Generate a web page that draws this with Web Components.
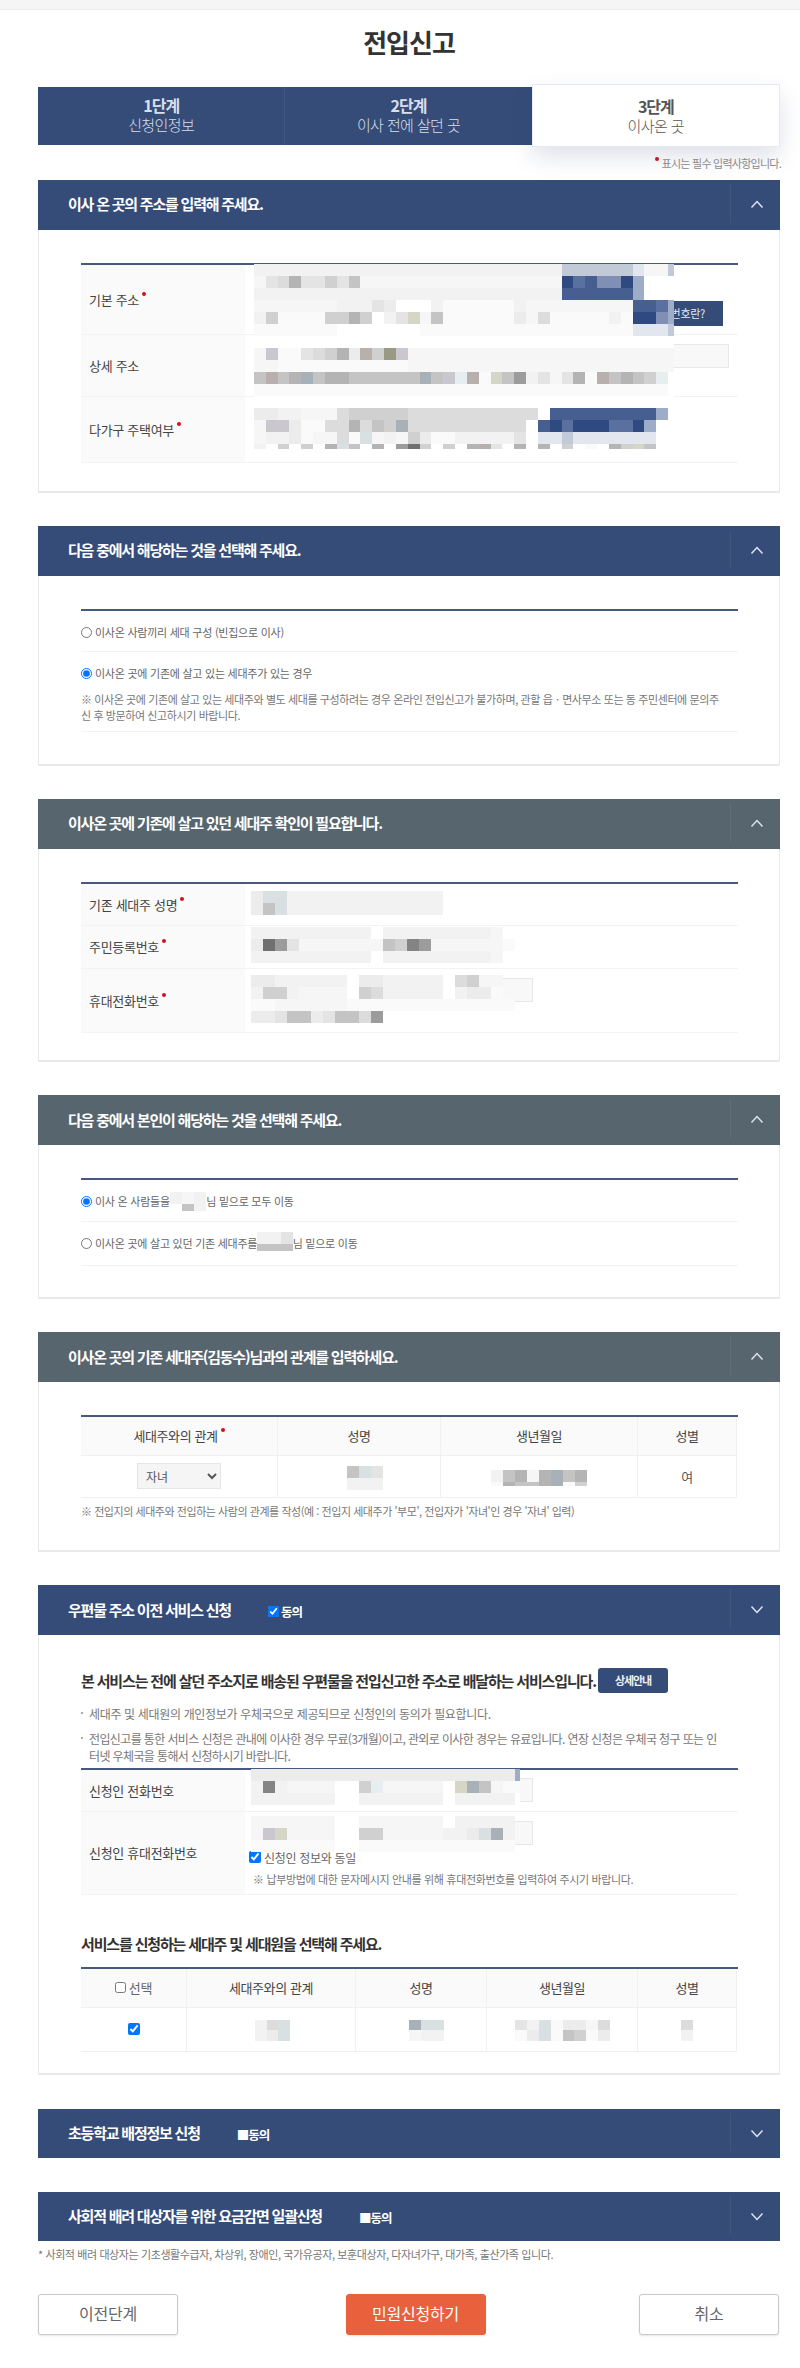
<!DOCTYPE html>
<html lang="ko">
<head>
<meta charset="utf-8">
<title>전입신고</title>
<style>
  html, body { margin: 0; background: #fff; }
  body { font-family: "Noto Sans CJK KR", "Noto Sans", sans-serif; color: #444; }
</style>
</head>
<body>
<move-in-page>
  <page-title>전입신고</page-title>
  <step-tabs>
    <step-tab step="1단계" name="신청인정보"></step-tab>
    <step-tab step="2단계" name="이사 전에 살던 곳"></step-tab>
    <step-tab step="3단계" name="이사온 곳" active></step-tab>
  </step-tabs>
  <req-note>표시는 필수 입력사항입니다.</req-note>

  <section-stack>
    <form-section heading="이사 온 곳의 주소를 입력해 주세요." body-height="263" open>
      <form-table>
        <form-row label="기본 주소" required h="69" justify="end">
          <small-button style="margin:36px 15px 0 0">우편번호란?</small-button>
        </form-row>
        <form-row label="상세 주소" h="61">
          <text-box style="width:474px;margin:9px 0 0 10px"></text-box>
        </form-row>
        <form-row label="다가구 주택여부" required h="65"></form-row>
        <pixel-block at="173,-1" cell="11.83,12" clip="420,185" rows="77777777777777777777777777kkkkkkj88k|85415535288888888888888888nmoiinlwww|77777777777777777777777777oooooolwww|888888877756www79999997888888888ooml|7399993313w75q8299999968499999 79nnil|9999999wwwwwww999999999999999999jjjk|wwwwwwwwwwwwwwwwwwwwwwwwwwwwwwwwwwww|8p9954316s3tp88888888888888888888888|889999999999988888888888888888888888|2s21r211222222r2pvs9q20758519s2123vw|99999999999999999999999999999999999w|wwwwwwwwwwwwwwwwwwwwwwwwwwwwwwwwwwww|667788843333344444444444wooooooooolww|8pp6994414 23r4444444444wonmnnnmmnlww|87769884 9u87836997777 75wjjkjjjjjjjww|7w3w3w1u2w1w0z3w3w1s5w1w1w3w9w13q2ww"></pixel-block>
      </form-table>
    </form-section>

    <form-section heading="다음 중에서 해당하는 것을 선택해 주세요." body-height="190" open>
      <form-table>
        <option-row h="41" text="이사온 사람끼리 세대 구성 (빈집으로 이사)"></option-row>
        <option-row h="80" text="이사온 곳에 기존에 살고 있는 세대주가 있는 경우" checked>
          ※ 이사온 곳에 기존에 살고 있는 세대주와 별도 세대를 구성하려는 경우 온라인 전입신고가 불가하며, 관할 읍ㆍ면사무소 또는 동 주민센터에 문의주<br>신 후 방문하여 신고하시기 바랍니다.
        </option-row>
      </form-table>
    </form-section>

    <form-section heading="이사온 곳에 기존에 살고 있던 세대주 확인이 필요합니다." tone="grey" body-height="213" open>
      <form-table>
        <form-row label="기존 세대주 성명" required h="41"></form-row>
        <form-row label="주민등록번호" required h="42"></form-row>
        <form-row label="휴대전화번호" required h="63">
          <text-box style="width:80px;margin:9px 0 0 208px"></text-box>
        </form-row>
        <pixel-block at="170,7" rows="6uu7777777777777|62u7777777777777"></pixel-block>
        <pixel-block at="170,43" rows="7777777777w7777777778|6z05888888823x0888888 9|7777777777w7777777778"></pixel-block>
        <pixel-block at="170,91" rows="66777777w6677777w4388|73378888w3477777w7669|9988888899999999999999|66522652240"></pixel-block>
      </form-table>
    </form-section>

    <form-section heading="다음 중에서 본인이 해당하는 것을 선택해 주세요." tone="grey" body-height="154" open>
      <form-table>
        <option-row h="42" checked text="이사 온 사람들을<gap-33>)님 밑으로 모두 이동"></option-row>
        <option-row h="44" text="이사온 곳에 살고 있던 기존 세대주를<gap-32>)님 밑으로 이동"></option-row>
        <pixel-block at="89,12" clip="36,19" rows="787|w27"></pixel-block>
        <pixel-block at="176,52" clip="36,19" rows="775|222"></pixel-block>
      </form-table>
    </form-section>

    <form-section heading="이사온 곳의 기존 세대주(김동수)님과의 관계를 입력하세요." tone="grey" body-height="170" open>
      <form-table>
        <grid-table columns="197px 163px 197px 99px" rows="39px 42px">
          <grid-cell head><span>세대주와의 관계<req-dot></req-dot></span></grid-cell>
          <grid-cell head>성명</grid-cell>
          <grid-cell head>생년월일</grid-cell>
          <grid-cell head>성별</grid-cell>
          <grid-cell><relation-select></relation-select></grid-cell>
          <grid-cell></grid-cell>
          <grid-cell></grid-cell>
          <grid-cell>여</grid-cell>
          <pixel-block at="266,49" rows="2u5|777"></pixel-block>
          <pixel-block at="410,53" clip="96,16" rows="72181r21|91221r93"></pixel-block>
        </grid-table>
      </form-table>
      <fine-note style="margin-top:5px">※ 전입지의 세대주와 전입하는 사람의 관계를 작성(예 : 전입지 세대주가 '부모', 전입자가 '자녀'인 경우 '자녀' 입력)</fine-note>
    </form-section>

    <form-section heading="우편물 주소 이전 서비스 신청" agree="check" agree-gap="37" body-height="440" open chevron="down">
      <lead-line style="margin-top:33px">본 서비스는 전에 살던 주소지로 배송된 우편물을 전입신고한 주소로 배달하는 서비스입니다.<info-button>상세안내</info-button></lead-line>
      <dot-item style="margin-top:12px;letter-spacing:-.34px">세대주 및 세대원의 개인정보가 우체국으로 제공되므로 신청인의 동의가 필요합니다.</dot-item>
      <dot-item style="margin-top:8px">전입신고를 통한 서비스 신청은 관내에 이사한 경우 무료(3개월)이고, 관외로 이사한 경우는 유료입니다. 연장 신청은 우체국 청구 또는 인<br>터넷 우체국을 통해서 신청하시기 바랍니다.</dot-item>
      <form-table style="margin-top:4px">
        <form-row label="신청인 전화번호" h="41">
          <text-box style="width:80px;margin:8px 0 0 208px"></text-box>
        </form-row>
        <form-row label="신청인 휴대전화번호" h="82">
          <div>
            <text-box style="width:80px;margin:9px 0 0 208px"></text-box>
            <same-check>신청인 정보와 동일</same-check>
            <fine-note style="margin:5px 0 0 8px;letter-spacing:-.34px">※ 납부방법에 대한 문자메시지 안내를 위해 휴대전화번호를 입력하여 주시기 바랍니다.</fine-note>
          </div>
        </form-row>
        <pixel-block at="170,-1" clip="269,36" rows="6666666666666666666666l|7x78888ww3v88888wqr28 99|7777777ww7777777w77777w"></pixel-block>
        <pixel-block at="170,46" rows="8888888ww8888888w77777|8pq8888ww3388888776ur7|9999999ww9999999999999"></pixel-block>
      </form-table>
      <lead-line style="margin-top:36px">서비스를 신청하는 세대주 및 세대원을 선택해 주세요.</lead-line>
      <form-table style="margin-top:11px">
        <grid-table columns="106px 169px 131px 151px 99px" rows="39px 44px">
          <grid-cell head><same-check mini>선택</same-check></grid-cell>
          <grid-cell head>세대주와의 관계</grid-cell>
          <grid-cell head>성명</grid-cell>
          <grid-cell head>생년월일</grid-cell>
          <grid-cell head>성별</grid-cell>
          <grid-cell><same-check checked-only></same-check></grid-cell>
          <grid-cell></grid-cell>
          <grid-cell></grid-cell>
          <grid-cell></grid-cell>
          <grid-cell></grid-cell>
          <pixel-block at="174,51" cell="11.5,10.5" rows="74u|76u"></pixel-block>
          <pixel-block at="328,51" cell="11.5,10.5" rows="ruu|877"></pixel-block>
          <pixel-block at="434,51" cell="11.9,10.5" rows="57u96684|96u92396"></pixel-block>
          <pixel-block at="600,51" cell="12,10.5" rows="4|7"></pixel-block>
        </grid-table>
      </form-table>
    </form-section>

    <form-section heading="초등학교 배정정보 신청" agree="box" agree-gap="37" chevron="down"></form-section>
    <form-section heading="사회적 배려 대상자를 위한 요금감면 일괄신청" agree="box" agree-gap="37" chevron="down"></form-section>
  </section-stack>

  <fine-note style="height:26px;display:flex;align-items:center;letter-spacing:-.4px">* 사회적 배려 대상자는 기초생활수급자, 차상위, 장애인, 국가유공자, 보훈대상자, 다자녀가구, 대가족, 출산가족 입니다.</fine-note>

  <action-bar>
    <action-button>이전단계</action-button>
    <action-button primary>민원신청하기</action-button>
    <action-button>취소</action-button>
  </action-bar>
</move-in-page>

<script>
const BLUE = '#354c78';
const GREY = '#57656e';
const KR = '"Noto Sans CJK KR", "Noto Sans", sans-serif';

// palette for the blurred (mosaic) personal data blocks
const SHADES = {
  w: '#ffffff', 9: '#fafafa', 8: '#f6f6f6', 7: '#f2f2f2', 6: '#ececec', 5: '#e4e4e4',
  4: '#dcdcdc', 3: '#d0d0d0', 2: '#c4c4c4', 1: '#b4b4b4', 0: '#9c9c9c', x: '#848484', z: '#707070',
  n: '#2f4a80', o: '#465f90', m: '#5a709f', i: '#8090b4', l: '#9dacc7', k: '#c2cad8', j: '#e2e7ef',
  p: '#cbc7cf', q: '#d6d6c6', r: '#a9b1b8', s: '#b8b0ac', t: '#9a9a84', u: '#d8e0e2', v: '#e6eeef'
};

class Base extends HTMLElement {
  constructor() {
    super();
    this.attachShadow({ mode: 'open' });
  }
  connectedCallback() {
    this.shadowRoot.innerHTML = this.markup();
  }
  markup() { return '<slot></slot>'; }
}

class MoveInPage extends Base {
  markup() {
    return `<style>
      :host { display: block; height: 2368px; overflow: hidden; box-sizing: border-box; font-family: ${KR}; }
      .top { height: 9px; background: #f5f5f5; border-bottom: 1px solid #eee; }
      .wrap { padding: 0 20px 0 38px; }
    </style>
    <div class="top"></div>
    <div class="wrap"><slot></slot></div>`;
  }
}

class PageTitle extends Base {
  markup() {
    return `<style>
      :host { display: flex; height: 77px; align-items: center; justify-content: center; padding-bottom: 14px; box-sizing: border-box;
        font-size: 26px; font-weight: 700; letter-spacing: -1px; color: #333; }
    </style><slot></slot>`;
  }
}

class StepTabs extends Base {
  markup() {
    return `<style>:host { display: flex; height: 58px; background: ${BLUE}; }</style><slot></slot>`;
  }
}

class StepTab extends Base {
  markup() {
    return `<style>
      :host { flex: 1; display: block; text-align: center; padding-top: 8px; box-sizing: border-box; color: #d9dfe9;
        border-left: 1px solid #3f5782; }
      :host(:first-child) { border-left: 0; }
      :host([active]) { background: #fff; color: #555; margin: -3px 0 -2px; padding-top: 11px; border: 1px solid #e6e9ef;
        box-shadow: 0 10px 22px rgba(53, 76, 120, .16); position: relative; }
      .s { font-size: 16px; font-weight: 700; line-height: 20px; letter-spacing: -1px; }
      .n { font-size: 15px; line-height: 20px; letter-spacing: -.6px; font-weight: 300; }
    </style>
    <div class="s">${this.getAttribute('step')}</div>
    <div class="n">${this.getAttribute('name')}</div>`;
  }
}

class ReqDot extends Base {
  markup() {
    return `<style>
      :host { display: inline-block; width: 4px; height: 4px; border-radius: 50%; background: #d2101c;
        vertical-align: 9px; margin-left: 3px; }
    </style>`;
  }
}

class ReqNote extends Base {
  markup() {
    return `<style>
      :host { display: flex; height: 35px; justify-content: flex-end; align-items: center; padding-right: 0; margin-right: -1px;
        font-size: 11px; letter-spacing: -.75px; color: #8a8a8a; position: relative; }
      i { width: 4px; height: 4px; border-radius: 50%; background: #d2101c; margin: -8px 3px 0 0; }
    </style><i></i><span><slot></slot></span>`;
  }
}

class SectionStack extends Base {
  markup() {
    return `<style>:host { display: flex; flex-direction: column; gap: 33.6px; }</style><slot></slot>`;
  }
}

class FormSection extends Base {
  markup() {
    const tone = this.getAttribute('tone') === 'grey' ? GREY : BLUE;
    const down = this.getAttribute('chevron') === 'down';
    const agree = this.getAttribute('agree');
    let agreeHtml = '';
    if (agree === 'check') agreeHtml = `<label class="agree" style="margin-left:${this.getAttribute('agree-gap')}px"><input type="checkbox" checked>동의</label>`;
    if (agree === 'box') agreeHtml = `<span class="agree" style="margin-left:${this.getAttribute('agree-gap')}px">■동의</span>`;
    const body = this.hasAttribute('open')
      ? `<div class="body" style="height:${this.getAttribute('body-height')}px"><slot></slot></div>` : '';
    return `<style>
      :host { display: block; }
      .head { height: 49.5px; background: ${tone}; color: #fff; display: flex; align-items: center; padding-left: 30px; position: relative; box-sizing: border-box; }
      h2 { margin: 0; font-size: 15px; font-weight: 700; letter-spacing: -1.22px; padding-bottom: 2px; }
      .agree { display: inline-flex; align-items: center; font-size: 12.5px; font-weight: 700; letter-spacing: -1px; margin-top: 3px; }
      .agree input { width: 11px; height: 11px; margin: 0 2px 0 0; }
      .sep { position: absolute; left: 692px; top: 4px; bottom: 7px; width: 1px; background: rgba(255, 255, 255, .06); }
      svg { position: absolute; left: 712px; top: 20px; }
      .body { display: flow-root; box-sizing: border-box; border: 1px solid #e9e9ec; border-top: 0; border-bottom-width: 2px; padding: 0 41px 0 42px; }
    </style>
    <div class="head">
      <h2>${this.getAttribute('heading')}</h2>${agreeHtml}
      <span class="sep"></span>
      <svg width="14" height="9" viewBox="0 0 14 9" fill="none" stroke="#dfe4ee" stroke-width="1.5">
        <path d="${down ? 'M1.5 1.5L7 7.5L12.5 1.5' : 'M1.5 7.5L7 1.5L12.5 7.5'}"/>
      </svg>
    </div>${body}`;
  }
}

class FormTable extends Base {
  connectedCallback() {
    super.connectedCallback();
    // sections without intro text start the table 33px under the head
    if (!this.previousElementSibling) this.style.marginTop = '33px';
  }
  markup() {
    return `<style>
      :host { display: block; position: relative; border-top: 2px solid #47597f; }
    </style><slot></slot>`;
  }
}

class FormRow extends Base {
  markup() {
    const req = this.hasAttribute('required') ? '<req-dot></req-dot>' : '';
    const justify = this.getAttribute('justify') === 'end' ? 'flex-end' : 'flex-start';
    return `<style>
      :host { display: grid; grid-template-columns: 164px 1fr; min-height: ${this.getAttribute('h')}px; border-bottom: 1px solid #f3f3f3; font-size: 13px; }
      .th { background: #fafafa; display: flex; align-items: center; padding-left: 8px; color: #444; letter-spacing: -.3px; }
      .td { display: flex; justify-content: ${justify}; align-items: flex-start; padding-left: 0; }
    </style>
    <div class="th"><span>${this.getAttribute('label')}${req}</span></div>
    <div class="td"><slot></slot></div>`;
  }
}

class OptionRow extends Base {
  markup() {
    const text = this.getAttribute('text').replace(/<gap-(\d+)>/, '<span style="margin-left:$1px"></span>');
    const checked = this.hasAttribute('checked') ? 'checked' : '';
    const hasNote = this.childNodes.length > 0;
    return `<style>
      :host { display: block; height: ${this.getAttribute('h')}px; box-sizing: border-box; border-bottom: 1px solid #f3f3f3; font-size: 11px; color: #666; }
      label { display: flex; align-items: center; height: 42px; letter-spacing: -.25px; }
      input { width: 11px; height: 11px; margin: 2px 3px 0 0; flex: none; }
      .note { margin-top: -3px; line-height: 16px; letter-spacing: -.4px; color: #777; }
    </style>
    <label><input type="radio" ${checked}><span>${text}</span></label>
    ${hasNote ? '<div class="note"><slot></slot></div>' : ''}`;
  }
}

class GridTable extends Base {
  markup() {
    return `<style>
      :host { display: grid; position: relative; grid-template-columns: ${this.getAttribute('columns')}; grid-template-rows: ${this.getAttribute('rows')}; }
    </style><slot></slot>`;
  }
}

class GridCell extends Base {
  markup() {
    return `<style>
      :host { display: flex; align-items: center; justify-content: center; font-size: 13px; color: #555; letter-spacing: -.4px;
        border-right: 1px solid #f1f1f1; border-bottom: 1px solid #f1f1f1; }
      :host([head]) { background: #fafafa; color: #444; }
    </style><slot></slot>`;
  }
}

class PixelBlock extends Base {
  connectedCallback() {
    const [x, y] = this.getAttribute('at').split(',');
    this.style.left = x + 'px';
    this.style.top = y + 'px';
    super.connectedCallback();
  }
  markup() {
    const [w, h] = (this.getAttribute('cell') || '12,12').split(',');
    const rows = this.getAttribute('rows').replace(/ /g, '').split('|').map(r => {
      const cells = [...r].map(c => `<b style="background:${SHADES[c]}"></b>`).join('');
      return `<div class="r">${cells}</div>`;
    }).join('');
    const clip = this.getAttribute('clip');
    const size = clip ? `width:${clip.split(',')[0]}px;height:${clip.split(',')[1]}px;overflow:hidden;` : '';
    return `<style>
      :host { position: absolute; display: block; ${size} }
      .r { display: flex; height: ${h}px; }
      b { flex: none; width: ${w}px; height: ${h}px; }
      .m { filter: blur(.5px); }
    </style><div class="m">${rows}</div>`;
  }
}

class TextBox extends Base {
  markup() {
    return `<style>
      :host { display: block; height: 24px; box-sizing: border-box; background: #f8f8f8; border: 1px solid #e8e8e8; }
    </style>`;
  }
}

class SmallButton extends Base {
  markup() {
    return `<style>
      :host { display: flex; width: 90px; height: 25px; align-items: center; justify-content: center; background: ${BLUE};
        color: #e6ebf2; font-size: 11px; letter-spacing: -.3px; }
    </style><slot></slot>`;
  }
}

class InfoButton extends Base {
  markup() {
    return `<style>
      :host { display: inline-flex; flex: none; width: 70px; height: 25px; align-items: center; justify-content: center; background: ${BLUE};
        color: #eef1f6; font-size: 11px; font-weight: 700; letter-spacing: -1.1px; border-radius: 3px; margin-left: 2px; }
    </style><slot></slot>`;
  }
}

class LeadLine extends Base {
  markup() {
    return `<style>
      :host { display: flex; align-items: center; height: 25px; font-size: 15px; font-weight: 700; letter-spacing: -1.15px; color: #333; white-space: nowrap; }
    </style><slot></slot>`;
  }
}

class DotItem extends Base {
  markup() {
    return `<style>
      :host { display: block; position: relative; padding-left: 8px; font-size: 12px; line-height: 17px; letter-spacing: -.62px; color: #777; white-space: nowrap; }
      i { position: absolute; left: 0; top: 7px; width: 2px; height: 2px; background: #aaa; }
    </style><i></i><slot></slot>`;
  }
}

class FineNote extends Base {
  markup() {
    return `<style>
      :host { display: block; font-size: 11px; line-height: 16px; letter-spacing: -.45px; color: #777; white-space: nowrap; }
    </style><slot></slot>`;
  }
}

class SameCheck extends Base {
  markup() {
    const mini = this.hasAttribute('mini');
    const only = this.hasAttribute('checked-only');
    const checked = mini ? '' : 'checked';
    return `<style>
      :host { display: flex; align-items: center; font-size: ${mini ? 13 : 12}px; letter-spacing: -.3px; color: #666; ${only || mini ? '' : 'margin-top:4px;'} }
      input { width: ${mini ? 11 : 12}px; height: ${mini ? 13 : 12}px; margin: 0 ${only ? 0 : 3}px 0 ${only || mini ? 0 : 4}px; }
    </style><input type="checkbox" ${checked}><span><slot></slot></span>`;
  }
}

class RelationSelect extends Base {
  markup() {
    return `<style>
      :host { display: block; }
      select { width: 84px; height: 26px; font: 12px ${KR}; color: #555; background: #f5f5f5; border: 1px solid #e6e6e6; padding-left: 4px; }
    </style><select><option>자녀</option><option>부모</option><option>배우자</option></select>`;
  }
}

class ActionBar extends Base {
  markup() {
    return `<style>:host { display: flex; justify-content: space-between; margin-top: 27px; padding-right: 1px; }</style><slot></slot>`;
  }
}

class ActionButton extends Base {
  markup() {
    return `<style>
      :host { display: flex; width: 140px; height: 41px; box-sizing: border-box; align-items: center; justify-content: center; padding-bottom: 3px;
        background: #fff; color: #666; border: 1px solid #c9c9c9; border-radius: 3px; box-shadow: 0 1px 2px rgba(0,0,0,.1);
        font-size: 16px; letter-spacing: -.2px; }
      :host([primary]) { background: #e9603d; border-color: #e9603d; color: #fff; margin-left: 14px; }
    </style><slot></slot>`;
  }
}

const elements = {
  'move-in-page': MoveInPage, 'page-title': PageTitle, 'step-tabs': StepTabs, 'step-tab': StepTab,
  'req-dot': ReqDot, 'req-note': ReqNote, 'section-stack': SectionStack, 'form-section': FormSection,
  'form-table': FormTable, 'form-row': FormRow, 'option-row': OptionRow, 'grid-table': GridTable,
  'grid-cell': GridCell, 'pixel-block': PixelBlock, 'text-box': TextBox, 'small-button': SmallButton,
  'info-button': InfoButton, 'lead-line': LeadLine, 'dot-item': DotItem, 'fine-note': FineNote,
  'same-check': SameCheck, 'relation-select': RelationSelect, 'action-bar': ActionBar, 'action-button': ActionButton
};
Object.entries(elements).forEach(([name, cls]) => customElements.define(name, cls));
</script>
</body>
</html>
